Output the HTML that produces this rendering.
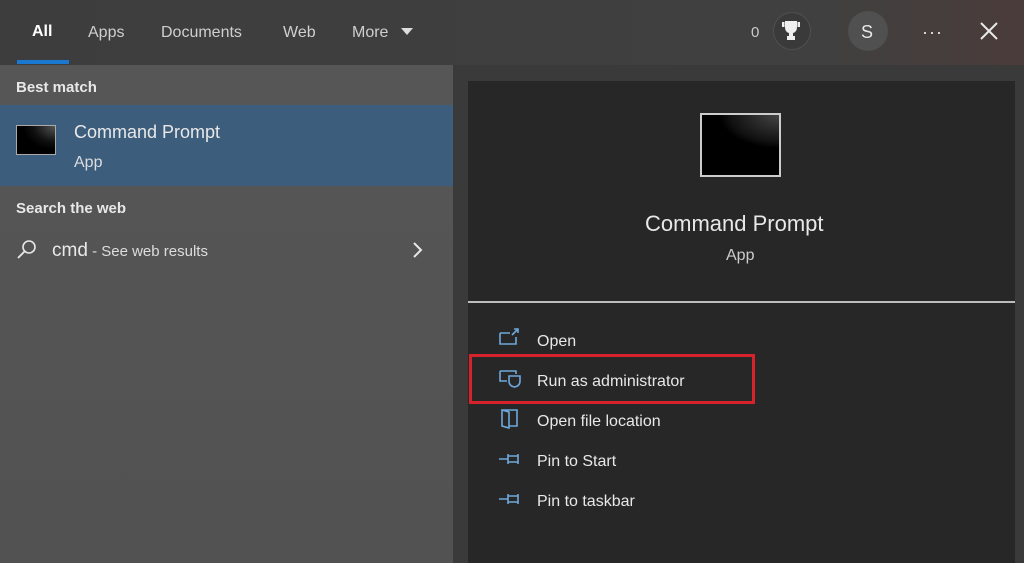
<!DOCTYPE html>
<html><head><style>
body{margin:0;width:1024px;height:563px;overflow:hidden;font-family:"Liberation Sans",sans-serif;background:#3a3a3a;position:relative}
div,span{position:absolute}
.t{color:#e8e8e8;white-space:nowrap}
</style></head><body>
<div style="left:0;top:0;width:1024px;height:65px;background:linear-gradient(90deg,#3d3d3d,#404040 80%,#4a3c3a)"></div>
<span class="t" style="left:32px;top:23px;font-size:16px;font-weight:bold;color:#fff">All</span>
<div style="left:17px;top:60px;width:52px;height:4px;background:#1a78d0"></div>
<span class="t" style="left:88px;top:24px;font-size:16px;color:#cfcfcf">Apps</span>
<span class="t" style="left:161px;top:24px;font-size:16px;color:#cfcfcf">Documents</span>
<span class="t" style="left:283px;top:24px;font-size:16px;color:#cfcfcf">Web</span>
<span class="t" style="left:352px;top:24px;font-size:16px;color:#cfcfcf">More</span>
<svg style="position:absolute;left:401px;top:28px" width="12" height="8"><path d="M0 0H12L6 7Z" fill="#ddd"/></svg>
<span class="t" style="left:751px;top:24px;font-size:15px;color:#ccc">0</span>
<div style="left:773px;top:12px;width:36px;height:36px;border-radius:50%;border:1px solid #505050;background:#3a3a3a"></div>
<svg style="position:absolute;left:780px;top:19px" width="22" height="24"><path d="M5 2H17V8Q17 13 13 14V17H15V21H7V17H9V14Q5 13 5 8Z" fill="#f0f0f0"/><rect x="2" y="3" width="2.5" height="5" fill="#f0f0f0"/><rect x="17.5" y="3" width="2.5" height="5" fill="#f0f0f0"/></svg>
<div style="left:848px;top:11px;width:40px;height:40px;border-radius:50%;background:#505050"></div>
<span class="t" style="left:861px;top:22px;font-size:18px">S</span>
<span class="t" style="left:922px;top:22px;font-size:18px;letter-spacing:1px">···</span>
<svg style="position:absolute;left:980px;top:22px" width="18" height="18"><path d="M1 1L17 17M17 1L1 17" stroke="#e8e8e8" stroke-width="2"/></svg>
<div style="left:0;top:65px;width:453px;height:498px;background:linear-gradient(180deg,#565656,#525252)"></div>
<span class="t" style="left:16px;top:79px;font-size:15px;font-weight:bold">Best match</span>
<div style="left:0;top:105px;width:453px;height:81px;background:#3d5d7d"></div>
<div style="left:16px;top:125px;width:40px;height:30px;background:radial-gradient(ellipse at 100% 0,#555 0,#111 40%,#000 60%);border:1px solid #aaa;box-sizing:border-box"></div>
<span class="t" style="left:74px;top:122px;font-size:18px">Command Prompt</span>
<span class="t" style="left:74px;top:154px;font-size:16px;color:#ddd">App</span>
<span class="t" style="left:16px;top:200px;font-size:15px;font-weight:bold">Search the web</span>
<svg style="position:absolute;left:16px;top:238px" width="22" height="22"><circle cx="13" cy="9" r="6" fill="none" stroke="#e8e8e8" stroke-width="1.6"/><path d="M9 13L2 20" stroke="#e8e8e8" stroke-width="1.8"/></svg>
<span class="t" style="left:52px;top:240px;font-size:19px">cmd<span style="position:static;font-size:15px;color:#ddd"> - See web results</span></span>
<svg style="position:absolute;left:412px;top:242px" width="12" height="16"><path d="M2 1L9 8L2 15" stroke="#e8e8e8" stroke-width="2" fill="none"/></svg>
<div style="left:468px;top:81px;width:547px;height:482px;background:#272727"></div>
<div style="left:1015px;top:65px;width:9px;height:498px;background:#3a3a3a"></div>
<div style="left:700px;top:113px;width:81px;height:64px;border:2px solid #ccc;box-sizing:border-box;background:radial-gradient(ellipse 140% 100% at 100% 0,#444 0,#111 45%,#000 55%)"></div>
<span class="t" style="left:645px;top:211px;font-size:22px">Command Prompt</span>
<span class="t" style="left:726px;top:247px;font-size:16px;color:#ccc">App</span>
<div style="left:468px;top:301px;width:547px;height:2px;background:#bcbcbc"></div>
<svg style="position:absolute;left:498px;top:328px" width="24" height="20" fill="none" stroke="#6fa8dc" stroke-width="1.6"><path d="M2 5H12M2 5V16H18V9M14 7L20 1M16 1H20V5"/></svg>
<span class="t" style="left:537px;top:333px;font-size:16px">Open</span>
<div style="left:469px;top:354px;width:286px;height:50px;border:3px solid #d6232b;box-sizing:border-box"></div>
<svg style="position:absolute;left:498px;top:368px" width="26" height="20" fill="none" stroke="#6fa8dc" stroke-width="1.6"><path d="M2 3H18V6M2 3V13H9"/><path d="M11 8H22V13Q22 18 16.5 19Q11 18 11 13Z"/></svg>
<span class="t" style="left:537px;top:373px;font-size:16px">Run as administrator</span>
<svg style="position:absolute;left:500px;top:408px" width="20" height="22" fill="none" stroke="#6fa8dc" stroke-width="1.6"><path d="M2 2L9 4V20L2 18ZM2 2H17V18H9"/></svg>
<span class="t" style="left:537px;top:413px;font-size:16px">Open file location</span>
<svg style="position:absolute;left:498px;top:451px" width="26" height="16" fill="none" stroke="#6fa8dc" stroke-width="1.6"><path d="M1 8H10M10 3V13M10 5H20V11H10M20 3V13"/></svg>
<span class="t" style="left:537px;top:453px;font-size:16px">Pin to Start</span>
<svg style="position:absolute;left:498px;top:491px" width="26" height="16" fill="none" stroke="#6fa8dc" stroke-width="1.6"><path d="M1 8H10M10 3V13M10 5H20V11H10M20 3V13"/></svg>
<span class="t" style="left:537px;top:493px;font-size:16px">Pin to taskbar</span>
</body></html>
